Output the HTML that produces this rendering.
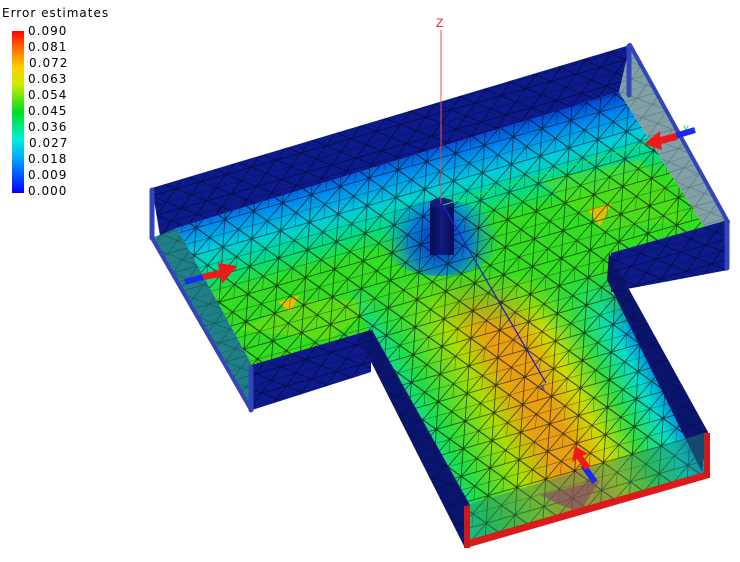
<!DOCTYPE html>
<html><head><meta charset="utf-8"><style>
html,body{margin:0;padding:0;background:#fff;width:740px;height:562px;overflow:hidden}
.t{font-family:"DejaVu Sans","Liberation Sans",sans-serif;font-size:12px;letter-spacing:1px}
</style></head><body>
<svg width="740" height="562" viewBox="0 0 740 562" xmlns="http://www.w3.org/2000/svg">
<defs>
<linearGradient id="leg" x1="0" y1="1" x2="0" y2="0">
<stop offset="0" stop-color="#0000ff"/><stop offset=".22" stop-color="#00aaff"/><stop offset=".33" stop-color="#00eedd"/>
<stop offset=".5" stop-color="#00dd22"/><stop offset=".67" stop-color="#ccee00"/><stop offset=".78" stop-color="#ffcc00"/>
<stop offset=".9" stop-color="#ff6600"/><stop offset="1" stop-color="#ff0000"/></linearGradient>
<pattern id="mesh" width="30" height="26" patternUnits="userSpaceOnUse" patternTransform="rotate(-16) skewX(-20)">
<path d="M0 0H30M0 13H30M0 0L15 13L30 0M0 26L15 13L30 26M0 13L0 0M15 0V26" stroke="#000" stroke-width=".8" fill="none" opacity=".75"/>
</pattern>
<pattern id="mesh2" width="26" height="20" patternUnits="userSpaceOnUse" patternTransform="rotate(-16)">
<path d="M0 0H26M0 10H26M0 0L13 10L26 0M0 20L13 10L26 20" stroke="#000" stroke-width=".7" fill="none" opacity=".6"/>
</pattern>
<linearGradient id="back" x1="400" y1="148" x2="425" y2="240" gradientUnits="userSpaceOnUse">
<stop offset="0" stop-color="#0033cc"/><stop offset=".25" stop-color="#0088ee"/><stop offset=".5" stop-color="#00ccdd"/><stop offset=".75" stop-color="#00dd88"/><stop offset="1" stop-color="#33dd22"/></linearGradient>
<radialGradient id="post" cx="440" cy="240" r="60" gradientUnits="userSpaceOnUse">
<stop offset="0" stop-color="#0022cc"/><stop offset=".5" stop-color="#0066ee" stop-opacity=".8"/><stop offset="1" stop-color="#00aaee" stop-opacity="0"/></radialGradient>
<linearGradient id="stem" x1="410" y1="450" x2="650" y2="330" gradientUnits="userSpaceOnUse">
<stop offset="0" stop-color="#00ddcc"/><stop offset=".15" stop-color="#22dd44"/><stop offset=".33" stop-color="#aadd00"/><stop offset=".45" stop-color="#e8a010"/><stop offset=".55" stop-color="#e8a010"/><stop offset=".65" stop-color="#ccdd00"/><stop offset=".77" stop-color="#33dd44"/><stop offset=".88" stop-color="#00ddcc"/><stop offset="1" stop-color="#0055ee"/></linearGradient>
<linearGradient id="stemfade" x1="0" y1="270" x2="0" y2="330" gradientUnits="userSpaceOnUse"><stop offset="0" stop-color="#fff" stop-opacity="0"/><stop offset="1" stop-color="#fff"/></linearGradient>
<mask id="sm"><rect width="740" height="562" fill="url(#stemfade)"/></mask>
<linearGradient id="cyl" x1="0" x2="1"><stop offset="0" stop-color="#060c50"/><stop offset=".5" stop-color="#101c80"/><stop offset="1" stop-color="#060c50"/></linearGradient>
</defs>

<text x="2" y="17" class="t" fill="#000">Error estimates</text>
<rect x="12" y="31" width="12" height="162" fill="url(#leg)"/>
<g class="t" fill="#000">
<text x="28" y="35">0.090</text><text x="28" y="51">0.081</text><text x="29" y="67">0.072</text>
<text x="28" y="83">0.063</text><text x="28" y="99">0.054</text><text x="28" y="115">0.045</text>
<text x="28" y="131">0.036</text><text x="29" y="147">0.027</text><text x="28" y="163">0.018</text>
<text x="28" y="179">0.009</text><text x="28" y="195">0.000</text></g>

<polygon points="177,228 619,92 705,228 611,258 611,290 700,440 705,472 470,545 467,505 372,335 252,365" fill="url(#back)"/>
<polygon points="240,330 300,300 380,300 330,340" fill="#77dd11" opacity=".6"/>
<polygon points="540,180 640,160 690,220 600,230" fill="#66dd11" opacity=".5"/>
<polygon points="350,290 610,250 611,290 700,440 705,472 470,545 467,505 372,335" fill="url(#stem)" mask="url(#sm)"/>
<polygon points="278,302 300,295 290,312" fill="#e0c000"/>
<polygon points="588,210 612,203 600,226" fill="#e0c000"/>
<ellipse cx="440" cy="238" rx="60" ry="38" fill="url(#post)"/>
<polygon points="177,228 619,92 705,228 611,258 611,290 700,440 705,472 470,545 467,505 372,335 252,365" fill="url(#mesh)"/>

<polygon points="152,188 630,45 619,92 177,228 160,236" fill="#0c1a8c"/>
<polygon points="152,188 630,45 619,92 177,228 160,236" fill="url(#mesh2)"/>
<polygon points="630,45 728,222 705,228 619,92" fill="#6a9098" opacity=".85"/>
<polygon points="630,45 728,222 705,228 619,92" fill="url(#mesh2)" opacity=".4"/>
<line x1="630" y1="45" x2="728" y2="222" stroke="#3344bb" stroke-width="4" stroke-linecap="round"/>
<polygon points="152,238 177,228 252,365 252,410" fill="#1f8088"/>
<polygon points="152,238 177,228 252,365 252,410" fill="url(#mesh2)" opacity=".5"/>
<line x1="152" y1="238" x2="250" y2="408" stroke="#3344bb" stroke-width="4" stroke-linecap="round"/>
<line x1="152" y1="190" x2="152" y2="238" stroke="#3344bb" stroke-width="5" stroke-linecap="round"/>
<line x1="629" y1="46" x2="629" y2="95" stroke="#3344bb" stroke-width="5" stroke-linecap="round"/>
<polygon points="611,253 728,220 728,270 611,292" fill="#0c1a8c"/>
<polygon points="611,253 728,220 728,270 611,292" fill="url(#mesh2)"/>
<line x1="727" y1="222" x2="727" y2="268" stroke="#3344bb" stroke-width="5" stroke-linecap="round"/>
<polygon points="609,253 708,432 702,472 607,280" fill="#0a1570"/>
<polygon points="609,253 708,432 702,472 607,280" fill="url(#mesh2)" opacity=".5"/>
<polygon points="252,365 371,330 371,372 252,410" fill="#0c1a8c"/>
<polygon points="252,365 371,330 371,372 252,410" fill="url(#mesh2)"/>
<line x1="251" y1="368" x2="251" y2="410" stroke="#3344bb" stroke-width="5" stroke-linecap="round"/>
<polygon points="359,338 372,330 470,505 465,548" fill="#0a1570"/>
<polygon points="359,338 372,330 470,505 465,548" fill="url(#mesh2)" opacity=".5"/>

<rect x="430" y="203" width="24" height="52" fill="url(#cyl)"/>
<ellipse cx="442" cy="203" rx="12" ry="5" fill="#101a80"/>

<polygon points="467,505 707,432 707,478 467,548" fill="#2a8a70" opacity=".45"/>
<polygon points="540,495 600,480 580,512 560,505" fill="#884466" opacity=".6"/>
<line x1="467" y1="544" x2="707" y2="475" stroke="#dd1a1a" stroke-width="7"/>
<line x1="467" y1="506" x2="467" y2="548" stroke="#cc1a1a" stroke-width="6"/>
<line x1="707" y1="433" x2="707" y2="478" stroke="#cc1a1a" stroke-width="6"/>

<line x1="441" y1="30" x2="441" y2="203" stroke="#e05050" stroke-width="1"/>
<text x="436" y="27" font-family="Liberation Sans,sans-serif" font-size="12" fill="#e02020">Z</text>
<line x1="444" y1="207" x2="546" y2="383" stroke="#2020cc" stroke-width="1.3"/>
<text x="540" y="390" font-family="Liberation Sans,sans-serif" font-size="10" fill="#2020cc">x</text>
<line x1="443" y1="205" x2="690" y2="130" stroke="#33dd33" stroke-width="1"/>
<text x="683" y="132" font-family="Liberation Sans,sans-serif" font-size="9" fill="#22cc22">Y</text>
<line x1="675" y1="136" x2="695" y2="130" stroke="#1a2aee" stroke-width="6"/>
<polygon points="644,144 660,131 660,137 676,133 677,140 661,144 662,150" fill="#ee1a1a"/>
<line x1="185" y1="282" x2="203" y2="277" stroke="#1a2aee" stroke-width="6"/>
<polygon points="237,266 218,263 219,270 202,274 204,280 221,277 222,284" fill="#ee1a1a"/>
<line x1="583" y1="465" x2="595" y2="482" stroke="#1a2aee" stroke-width="6"/>
<polygon points="575,446 572,462 577,459 585,470 590,466 582,455 588,454" fill="#ee1a1a"/>
</svg>
</body></html>
